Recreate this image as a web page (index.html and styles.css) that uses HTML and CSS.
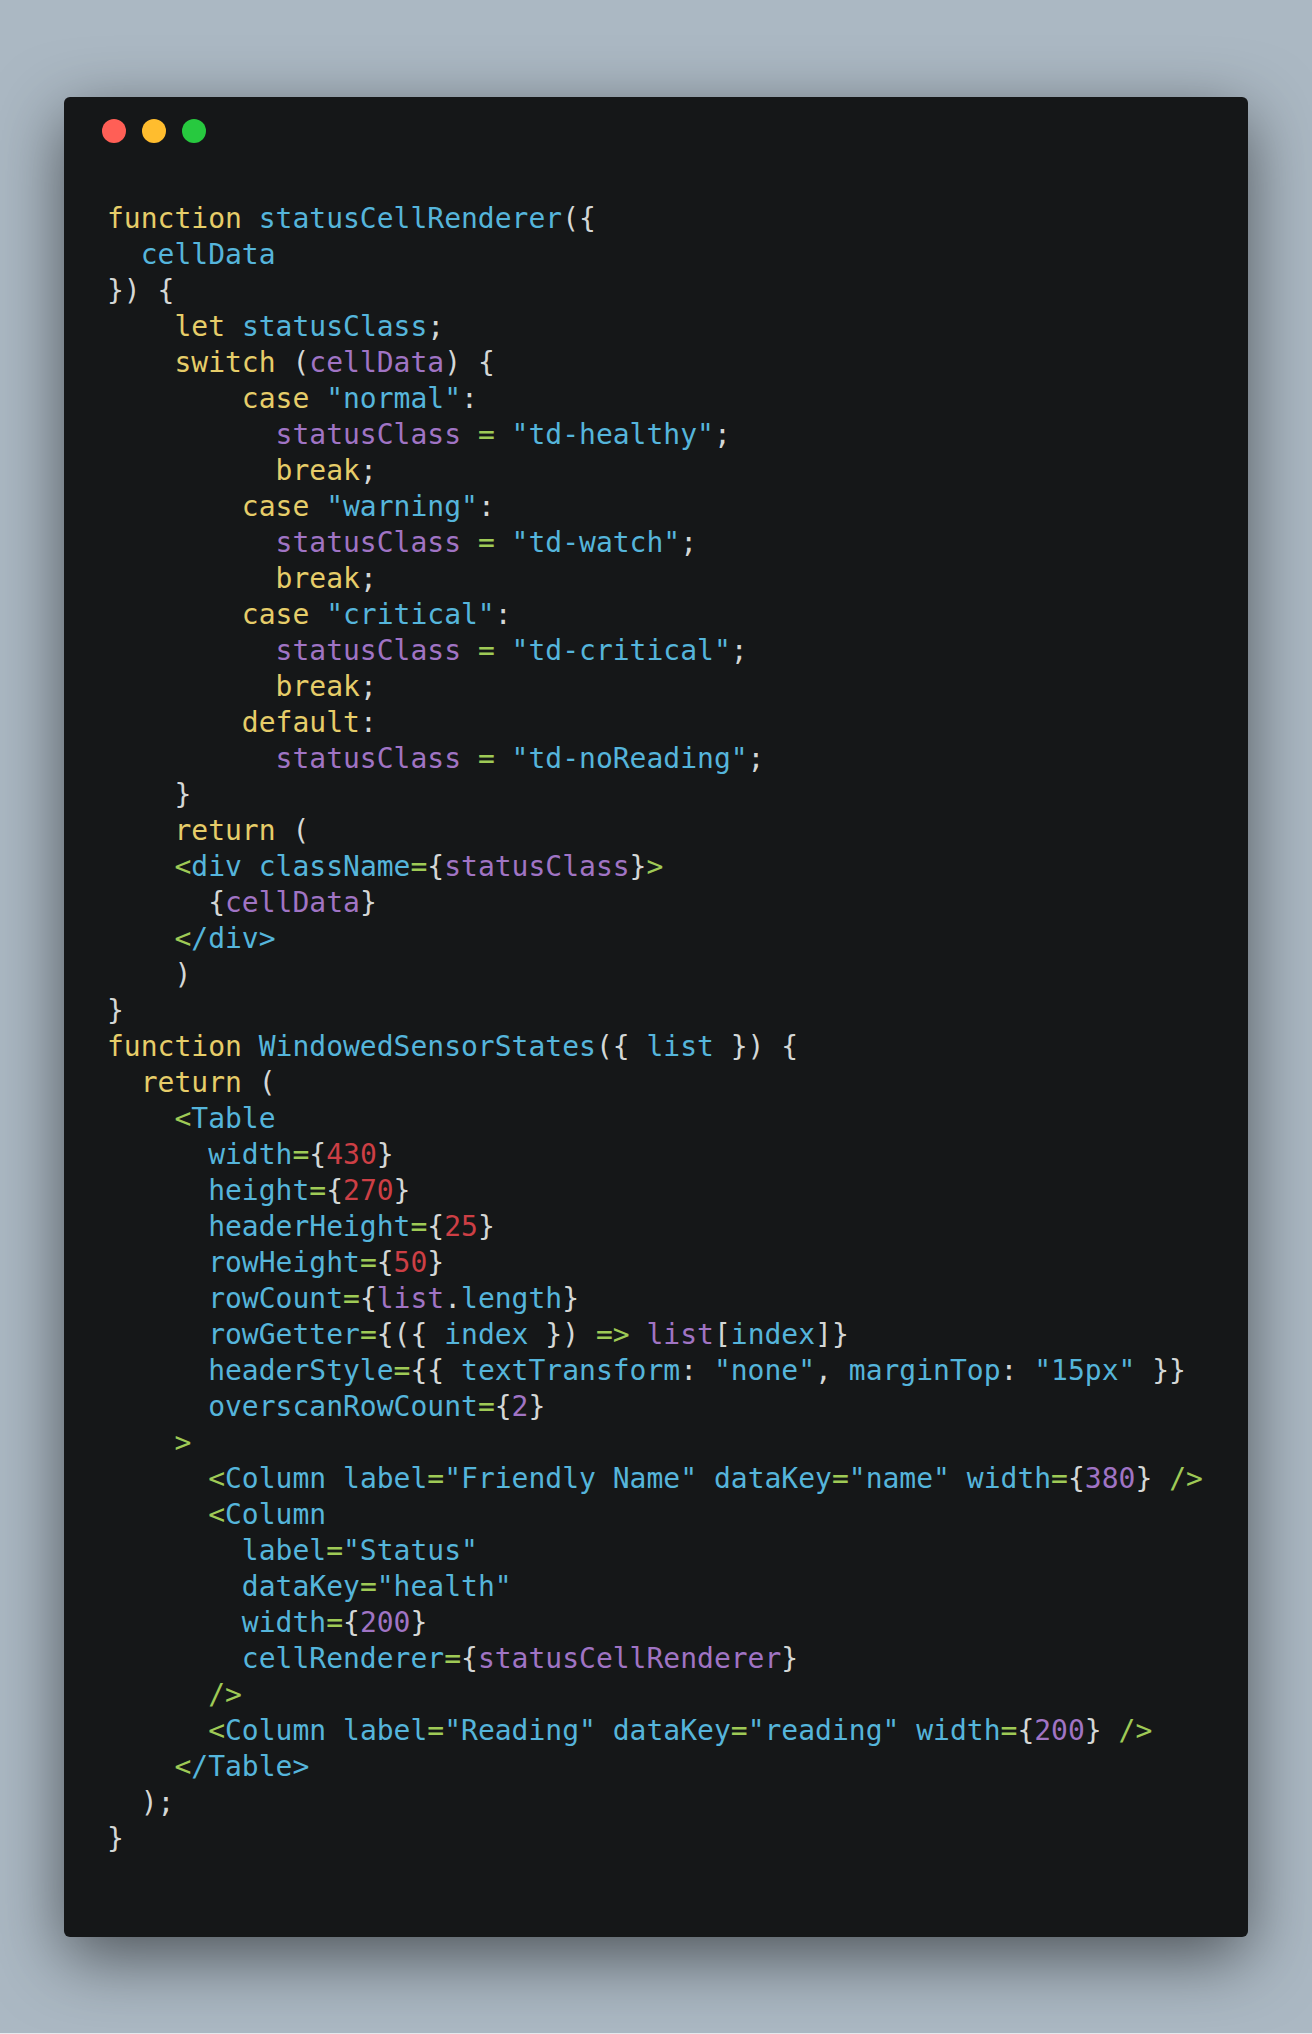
FILE: index.html
```html
<!DOCTYPE html>
<html lang="en">
<head>
<meta charset="utf-8">
<title>statusCellRenderer</title>
<link rel="stylesheet" href="styles.css">
</head>
<body>
<div class="stage">
  <div class="window">
    <div class="controls">
      <span class="dot dot-red"></span>
      <span class="dot dot-yellow"></span>
      <span class="dot dot-green"></span>
    </div>
<pre class="code"><span class="k">function</span> <span class="d">statusCellRenderer</span>({
  <span class="d">cellData</span>
}) {
    <span class="k">let</span> <span class="d">statusClass</span>;
    <span class="k">switch</span> (<span class="v">cellData</span>) {
        <span class="k">case</span> <span class="s">"normal"</span>:
          <span class="v">statusClass</span> <span class="o">=</span> <span class="s">"td-healthy"</span>;
          <span class="k">break</span>;
        <span class="k">case</span> <span class="s">"warning"</span>:
          <span class="v">statusClass</span> <span class="o">=</span> <span class="s">"td-watch"</span>;
          <span class="k">break</span>;
        <span class="k">case</span> <span class="s">"critical"</span>:
          <span class="v">statusClass</span> <span class="o">=</span> <span class="s">"td-critical"</span>;
          <span class="k">break</span>;
        <span class="k">default</span>:
          <span class="v">statusClass</span> <span class="o">=</span> <span class="s">"td-noReading"</span>;
    }
    <span class="k">return</span> (
    <span class="o">&lt;</span><span class="d">div</span> <span class="d">className</span><span class="o">=</span>{<span class="v">statusClass</span>}<span class="o">&gt;</span>
      {<span class="v">cellData</span>}
    <span class="o">&lt;</span><span class="d">/div&gt;</span>
    )
}
<span class="k">function</span> <span class="d">WindowedSensorStates</span>({ <span class="d">list</span> }) {
  <span class="k">return</span> (
    <span class="o">&lt;</span><span class="d">Table</span>
      <span class="d">width</span><span class="o">=</span>{<span class="n">430</span>}
      <span class="d">height</span><span class="o">=</span>{<span class="n">270</span>}
      <span class="d">headerHeight</span><span class="o">=</span>{<span class="n">25</span>}
      <span class="d">rowHeight</span><span class="o">=</span>{<span class="n">50</span>}
      <span class="d">rowCount</span><span class="o">=</span>{<span class="v">list</span>.<span class="d">length</span>}
      <span class="d">rowGetter</span><span class="o">=</span>{({ <span class="d">index</span> }) <span class="o">=&gt;</span> <span class="v">list</span>[<span class="d">index</span>]}
      <span class="d">headerStyle</span><span class="o">=</span>{{ <span class="d">textTransform</span>: <span class="s">"none"</span>, <span class="d">marginTop</span>: <span class="s">"15px"</span> }}
      <span class="d">overscanRowCount</span><span class="o">=</span>{<span class="v">2</span>}
    <span class="o">&gt;</span>
      <span class="o">&lt;</span><span class="d">Column</span> <span class="d">label</span><span class="o">=</span><span class="s">"Friendly Name"</span> <span class="d">dataKey</span><span class="o">=</span><span class="s">"name"</span> <span class="d">width</span><span class="o">=</span>{<span class="v">380</span>} <span class="o">/&gt;</span>
      <span class="o">&lt;</span><span class="d">Column</span>
        <span class="d">label</span><span class="o">=</span><span class="s">"Status"</span>
        <span class="d">dataKey</span><span class="o">=</span><span class="s">"health"</span>
        <span class="d">width</span><span class="o">=</span>{<span class="v">200</span>}
        <span class="d">cellRenderer</span><span class="o">=</span>{<span class="v">statusCellRenderer</span>}
      <span class="o">/&gt;</span>
      <span class="o">&lt;</span><span class="d">Column</span> <span class="d">label</span><span class="o">=</span><span class="s">"Reading"</span> <span class="d">dataKey</span><span class="o">=</span><span class="s">"reading"</span> <span class="d">width</span><span class="o">=</span>{<span class="v">200</span>} <span class="o">/&gt;</span>
    <span class="o">&lt;</span><span class="d">/Table&gt;</span>
  );
}</pre>
  </div>
</div>
</body>
</html>
```
FILE: styles.css
```css
html, body {
  margin: 0;
  padding: 0;
}

body {
  background: #abb8c3;
}

.stage {
  box-sizing: border-box;
  width: 1312px;
  height: 2034px;
  padding: 97px 64px 96px;
  background: #abb8c3;
  border-bottom: 1px solid #e6eaee;
}

.window {
  box-sizing: border-box;
  width: 1184px;
  height: 1840px;
  background: #151718;
  border-radius: 6px;
  box-shadow: 0 20px 68px rgba(0, 0, 0, 0.55);
  padding: 22px 0 0 0;
}

.controls {
  display: flex;
  gap: 16px;
  padding-left: 38px;
  height: 24px;
}

.dot {
  display: block;
  width: 24px;
  height: 24px;
  border-radius: 50%;
}

.dot-red { background: #ff5f56; }
.dot-yellow { background: #ffbd2e; }
.dot-green { background: #27c93f; }

.code {
  margin: 58px 0 0 0;
  padding: 0 0 0 43px;
  font-family: "DejaVu Sans Mono", monospace;
  font-size: 28px;
  line-height: 36px;
  color: #d4d7d6;
  white-space: pre;
  font-variant-ligatures: none;
}

.k { color: #e6cd69; }
.d { color: #55b5db; }
.s { color: #55b5db; }
.v { color: #a074c4; }
.o { color: #9fca56; }
.n { color: #cd3f45; }
```
